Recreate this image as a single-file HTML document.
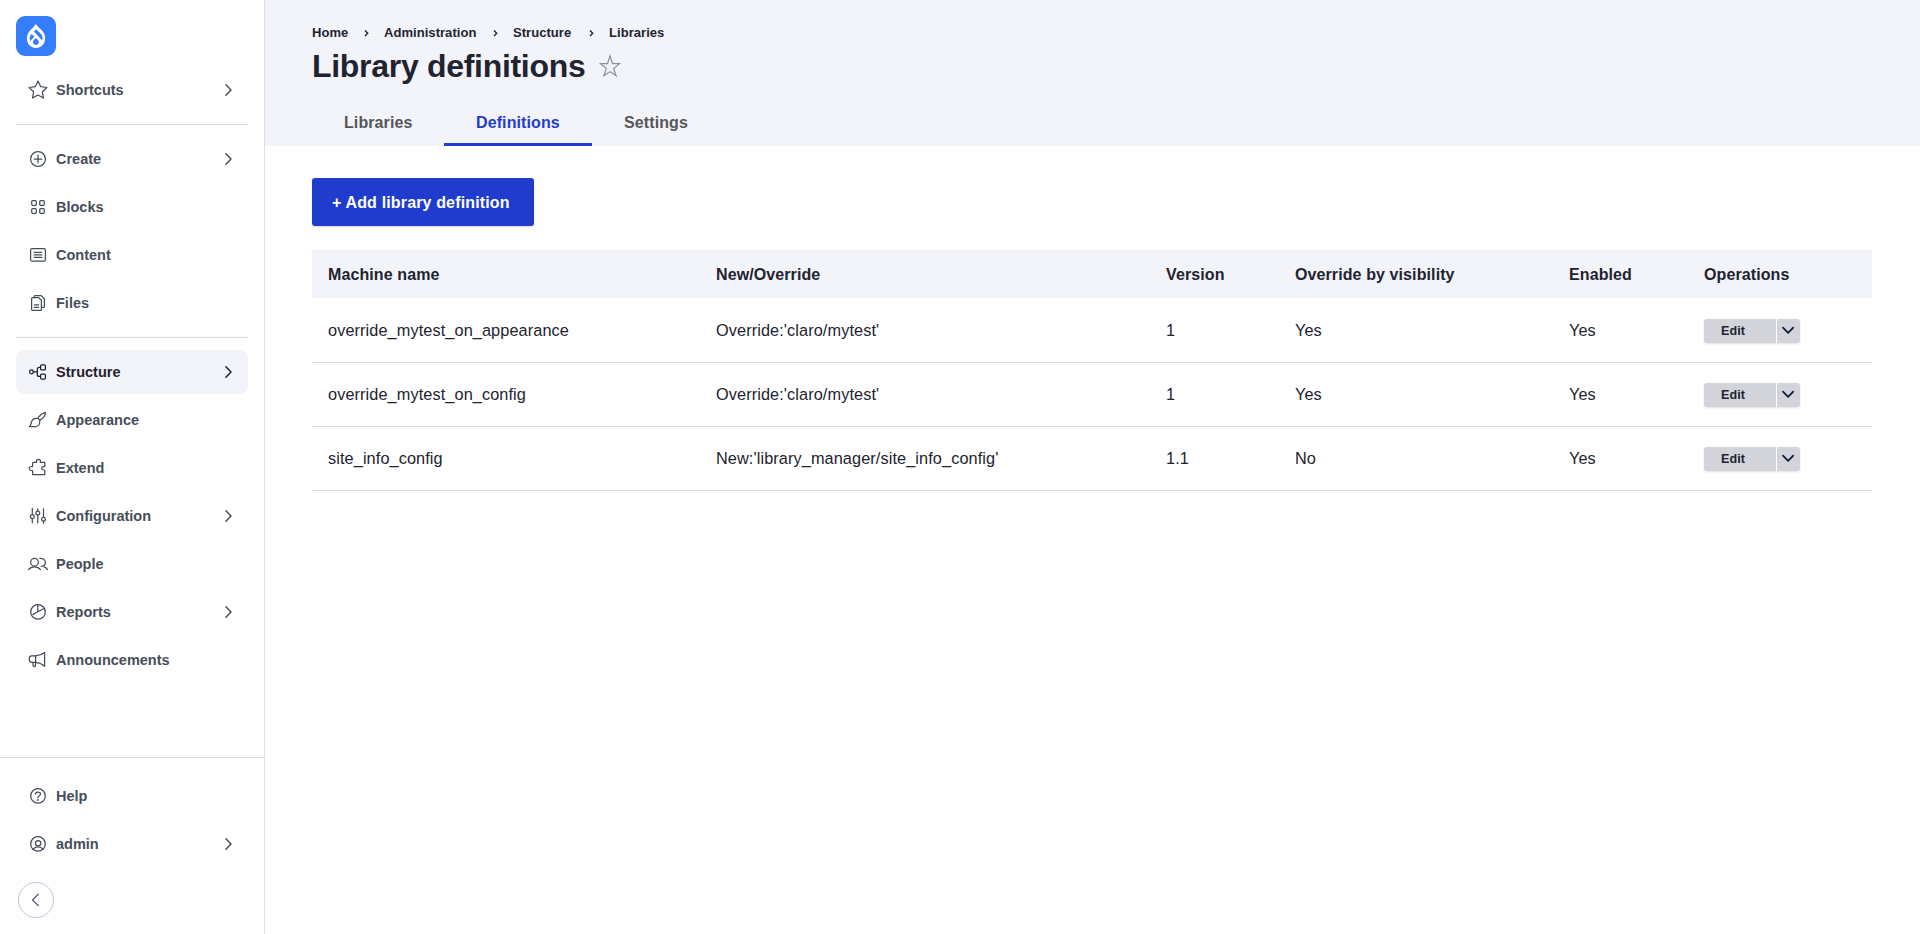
<!DOCTYPE html>
<html><head><meta charset="utf-8">
<style>
*{box-sizing:border-box;margin:0;padding:0}
html,body{width:1920px;height:934px;overflow:hidden;background:#fff;font-family:"Liberation Sans",sans-serif;}
#side{position:absolute;left:0;top:0;width:265px;height:934px;background:#fff;border-right:1px solid #d8deea;}
.logo{position:absolute;left:16px;top:16px;width:40px;height:40px;border-radius:9px;background:#347efe;}
.logo svg{position:absolute;left:0;top:0}
.item{position:absolute;left:16px;width:232px;height:44px;border-radius:8px;}
.item.active{background:#f3f4f9;}
.item .lbl{position:absolute;left:40px;top:0;line-height:44px;font-size:14.5px;font-weight:bold;color:#464e5a;white-space:nowrap;letter-spacing:0}
.item.active .lbl{color:#1f2229}
.item svg.ic{position:absolute;left:12px;top:12px;overflow:visible}
.item svg.chev{position:absolute;left:204px;top:12px;}
.ic *{fill:none;stroke:#464e5a;stroke-width:1.25;stroke-linecap:round;stroke-linejoin:round}
.active .ic *{stroke:#1f2229}
.chev path{fill:none;stroke:#464e5a;stroke-width:1.5;stroke-linecap:round;stroke-linejoin:round}
.hr{position:absolute;left:16px;width:232px;height:1px;background:#d3d9e4}
.collapse{position:absolute;left:18px;top:882px;width:36px;height:36px;border-radius:50%;border:1px solid #bcc5d8;background:#fff}
.collapse svg{position:absolute;left:0;top:0}
#main{position:absolute;left:265px;top:0;width:1655px;height:934px;}
#hdr{position:absolute;left:0;top:0;width:1655px;height:146px;background:#f3f4f9;}
.bc{position:absolute;top:25px;font-size:13px;font-weight:bold;color:#222330;white-space:nowrap;line-height:16px;letter-spacing:.05px}
.bcsep{position:absolute;top:29px;}
h1{position:absolute;left:47px;top:46px;font-size:32px;font-weight:bold;color:#222330;line-height:40px;white-space:nowrap;letter-spacing:-.3px}
.hstar{position:absolute;left:333px;top:54px}
.tab{position:absolute;top:107px;font-size:16px;font-weight:bold;color:#55565b;line-height:32px;white-space:nowrap;letter-spacing:.1px}
.tab.on{color:#1f3ccd}
.uline{position:absolute;left:179px;top:143px;width:148px;height:3px;background:#1f3ccd}
.btn{position:absolute;left:47px;top:178px;width:222px;height:48px;background:#1f3ccd;border-radius:3px;box-shadow:0 1px 2px rgba(0,0,0,.15)}
.btn span{position:absolute;left:20px;top:1px;color:#fff;font-size:16px;font-weight:bold;line-height:48px;white-space:nowrap;letter-spacing:.15px}
.thead{position:absolute;left:47px;top:250px;width:1560px;height:48px;background:#f3f4f9}
.th{position:absolute;top:251px;line-height:48px;font-size:16px;font-weight:bold;color:#222330;white-space:nowrap;letter-spacing:.1px}
.td{position:absolute;font-size:16.3px;color:#222330;white-space:nowrap;line-height:20px;letter-spacing:.1px}
.rsep{position:absolute;left:47px;width:1560px;height:1px;background:#d4d5de}
.drop{position:absolute;left:1439px;width:96px;height:24px;border-radius:3px;background:#d3d4d9;box-shadow:0 1px 2px rgba(0,0,0,.12)}
.drop .e{position:absolute;left:17px;top:0;line-height:24px;font-size:12.5px;font-weight:bold;color:#222330;letter-spacing:.1px}
.drop .d{position:absolute;left:72px;top:0;width:1px;height:24px;background:#fff}
.drop svg{position:absolute;left:73px;top:0}
.drop svg path{fill:none;stroke:#0f1b45;stroke-width:1.8;stroke-linecap:round;stroke-linejoin:round}
</style></head><body>
<div id="side">
  <div class="logo"><svg width="40" height="40" viewBox="0 0 40 40">
    <path fill="#fff" d="M19.8 8 C21.5 10.5 24 12.5 26 14.5 C28 16.5 29.1 19.3 29.1 22.7 C29.1 27.8 25 31.9 20 31.9 C15 31.9 10.9 27.8 10.9 22.7 C10.9 19.3 12.2 16.5 14 14.5 C16 12.5 18.3 10.5 19.8 8 Z"/>
    <path fill="#347efe" d="M18 15.4 L20.1 13.3 C22.5 15.5 25.5 17.8 26.4 20.5 C26.7 21.8 26.5 23.2 26.1 24.4 Z"/>
    <path fill="#347efe" d="M15.4 18 L18.4 20.6 L14.1 25.3 C13.7 24 13.6 22.8 13.8 21.6 C14.1 20.2 14.6 19 15.4 18 Z"/>
    <path fill="#347efe" d="M19.9 22 C20.7 23 22.9 24.3 22.9 25.9 C22.9 27.5 21.6 28.8 19.9 28.8 C18.2 28.8 16.9 27.5 16.9 25.9 C16.9 24.3 19.1 23 19.9 22 Z"/>
  </svg></div>

  <div class="item" style="top:68px">
    <svg class="ic" width="20" height="20" viewBox="0 0 20 20"><path d="M10.00 1.00 L12.70 6.68 L18.94 7.50 L14.37 11.82 L15.53 18.00 L10.00 15.00 L4.47 18.00 L5.63 11.82 L1.06 7.50 L7.30 6.68 Z"/></svg>
    <span class="lbl">Shortcuts</span>
    <svg class="chev" width="20" height="20" viewBox="0 0 20 20"><path d="M5.9 4.8 L11 10 L5.9 15.2"/></svg>
  </div>
  <div class="hr" style="top:124px"></div>
  <div class="item" style="top:137px">
    <svg class="ic" width="20" height="20" viewBox="0 0 20 20"><circle cx="10" cy="10" r="7.4"/><path d="M6.2 10 H13.8 M10 6.2 V13.8"/></svg>
    <span class="lbl">Create</span>
    <svg class="chev" width="20" height="20" viewBox="0 0 20 20"><path d="M5.9 4.8 L11 10 L5.9 15.2"/></svg>
  </div>
  <div class="item" style="top:185px">
    <svg class="ic" width="20" height="20" viewBox="0 0 20 20"><rect x="3.7" y="3.7" width="4.6" height="4.6" rx="1"/><rect x="11.7" y="3.7" width="4.6" height="4.6" rx="1"/><rect x="3.7" y="11.7" width="4.6" height="4.6" rx="1"/><rect x="11.7" y="11.7" width="4.6" height="4.6" rx="1"/></svg>
    <span class="lbl">Blocks</span>
  </div>
  <div class="item" style="top:233px">
    <svg class="ic" width="20" height="20" viewBox="0 0 20 20"><rect x="2.6" y="3.6" width="14.8" height="12.6" rx="1.5"/><path d="M6.2 7.4 H13.8 M6.2 9.9 H13.8 M6.2 12.4 H13.8"/></svg>
    <span class="lbl">Content</span>
  </div>
  <div class="item" style="top:281px">
    <svg class="ic" width="20" height="20" viewBox="0 0 20 20"><path d="M6.2 4.6 V3.5 C6.2 2.9 6.6 2.6 7.2 2.6 H13.2 L16.4 5.8 V13.4 C16.4 14 16 14.4 15.4 14.4 H13.9"/><path d="M4.6 4.6 H10.8 L13.4 7.3 V16.4 C13.4 17 13 17.3 12.4 17.3 H4.6 C4 17.3 3.6 17 3.6 16.4 V5.6 C3.6 5 4 4.6 4.6 4.6 Z"/><path d="M6.4 11.8 H10.6 M6.4 14.4 H10.6"/></svg>
    <span class="lbl">Files</span>
  </div>
  <div class="hr" style="top:337px"></div>
  <div class="item active" style="top:350px">
    <svg class="ic" width="20" height="20" viewBox="0 0 20 20"><rect x="1.7" y="7.8" width="3.5" height="4" rx="1.5"/><path d="M5.2 9.8 H9.3 M12.1 5.4 H11.3 C10.2 5.4 9.3 6.3 9.3 7.4 V12.4 C9.3 13.5 10.2 14.4 11.3 14.4 H12.1"/><rect x="12.6" y="2.9" width="4.8" height="5" rx="1"/><rect x="12.6" y="12" width="4.8" height="5" rx="1"/></svg>
    <span class="lbl">Structure</span>
    <svg class="chev" width="20" height="20" viewBox="0 0 20 20"><path d="M5.9 4.8 L11 10 L5.9 15.2" style="stroke:#1f2229"/></svg>
  </div>
  <div class="item" style="top:398px">
    <svg class="ic" width="20" height="20" viewBox="0 0 20 20"><path d="M9.6 8.3 C11.2 6 14 3.3 17.6 2.3 C17.3 5.5 14.6 8.6 12.3 10.2 Z"/><path d="M9.4 8.5 C7 7.9 4.6 8.9 3.7 11.4 C3.1 13.3 2.9 15.5 1.4 16.5 H8.3 C10.4 16.1 11.9 13.9 11.7 10.6"/></svg>
    <span class="lbl">Appearance</span>
  </div>
  <div class="item" style="top:446px">
    <svg class="ic" width="20" height="20" viewBox="0 0 20 20"><path d="M4.6 16.5 H16.8 V12.5 L14.2 11.5 C13.2 11 13.6 9.5 14.6 8.8 L16.8 8.3 V5.2 C16.8 4.7 16.4 4.4 15.9 4.4 H12.4 V3 C12.4 2 11.6 1.3 10.5 1.3 C9.4 1.3 8.5 2 8.5 3 V4.4 H5.6 C5 4.4 4.6 4.8 4.6 5.4 V8.5 H3 C1.8 8.9 1.1 9.6 1.1 10.6 C1.1 11.6 2 12.4 3.2 12.5 L4.6 12.7 Z"/></svg>
    <span class="lbl">Extend</span>
  </div>
  <div class="item" style="top:494px">
    <svg class="ic" width="20" height="20" viewBox="0 0 20 20"><path d="M4.3 2.4 V8.7 M4.3 12.5 V16.8 M9.8 2.9 V5 M9.8 8.8 V16.8 M15.5 2.9 V11.3 M15.5 15.1 V17.3"/><circle cx="4.3" cy="10.6" r="1.9"/><circle cx="9.8" cy="6.9" r="1.9"/><circle cx="15.5" cy="13.2" r="1.9"/></svg>
    <span class="lbl">Configuration</span>
    <svg class="chev" width="20" height="20" viewBox="0 0 20 20"><path d="M5.9 4.8 L11 10 L5.9 15.2"/></svg>
  </div>
  <div class="item" style="top:542px">
    <svg class="ic" width="20" height="20" viewBox="0 0 20 20"><circle cx="6.5" cy="8.2" r="3.8"/><path d="M0.6 15.6 C1.8 13.8 3.4 12.8 6.5 12.8 C9.6 12.8 11.2 13.8 12.5 15.6"/><path d="M12 4.4 C14.5 4.2 17.4 5.6 17.4 8.3 C17.4 10.8 15.4 12.3 13.3 12.4"/><path d="M16 12.9 C17.4 13.3 18.7 14.3 19.6 15.6"/></svg>
    <span class="lbl">People</span>
  </div>
  <div class="item" style="top:590px">
    <svg class="ic" width="20" height="20" viewBox="0 0 20 20"><circle cx="10" cy="9.9" r="7.3"/><path d="M9.8 2.7 V9.8 L4.8 12.6 M9.8 9.8 L16.2 6.5"/></svg>
    <span class="lbl">Reports</span>
    <svg class="chev" width="20" height="20" viewBox="0 0 20 20"><path d="M5.9 4.8 L11 10 L5.9 15.2"/></svg>
  </div>
  <div class="item" style="top:638px">
    <svg class="ic" width="20" height="20" viewBox="0 0 20 20"><path d="M7.6 5.8 H3.6 C2.2 5.8 1.2 7 1.2 9.1 C1.2 11.2 2.2 12.4 3.6 12.4 H7.6 Z"/><path d="M7.6 5.8 C10.5 5.6 13.5 5 16.6 2.4 V16.3 C13.5 13.6 10.5 12.6 7.6 12.4"/><path d="M4.8 12.4 L5.2 15.8 C5.3 16.4 5.7 16.6 6.2 16.6 C6.9 16.6 7.3 16.2 7.4 15.6 L7.6 12.4"/></svg>
    <span class="lbl">Announcements</span>
  </div>

  <div class="hr" style="top:757px;left:0;width:264px"></div>
  <div class="item" style="top:774px">
    <svg class="ic" width="20" height="20" viewBox="0 0 20 20"><circle cx="10" cy="9.9" r="7.3"/><path d="M7.4 8.2 C7.4 6.8 8.6 6 9.9 6 C11.3 6 12.5 6.9 12.5 8.1 C12.5 9.4 11.4 9.8 10.6 10.4 C10.1 10.8 9.9 11.2 9.9 11.7"/><circle cx="9.9" cy="14" r=".35"/></svg>
    <span class="lbl">Help</span>
  </div>
  <div class="item" style="top:822px">
    <svg class="ic" width="20" height="20" viewBox="0 0 20 20"><circle cx="10" cy="9.9" r="7.3"/><circle cx="10.1" cy="9.2" r="2.7"/><path d="M5 15.3 C6.2 13.6 7.9 12.8 10 12.8 C12.1 12.8 13.8 13.6 15 15.3"/></svg>
    <span class="lbl">admin</span>
    <svg class="chev" width="20" height="20" viewBox="0 0 20 20"><path d="M5.9 4.8 L11 10 L5.9 15.2"/></svg>
  </div>
  <div class="collapse"><svg width="34" height="34" viewBox="0 0 34 34"><path d="M19.2 11.2 L13.6 16.9 L19.2 22.5" fill="none" stroke="#5a6272" stroke-width="1.4" stroke-linecap="round" stroke-linejoin="round"/></svg></div>
</div>

<div id="main">
  <div id="hdr">
    <span class="bc" style="left:47px">Home</span>
    <svg class="bcsep" style="left:99px" width="6" height="8" viewBox="0 0 6 8"><path d="M1 1.5 L3.7 4.2 L1 6.9" fill="none" stroke="#222330" stroke-width="1.4"/></svg>
    <span class="bc" style="left:119px">Administration</span>
    <svg class="bcsep" style="left:228px" width="6" height="8" viewBox="0 0 6 8"><path d="M1 1.5 L3.7 4.2 L1 6.9" fill="none" stroke="#222330" stroke-width="1.4"/></svg>
    <span class="bc" style="left:248px">Structure</span>
    <svg class="bcsep" style="left:324px" width="6" height="8" viewBox="0 0 6 8"><path d="M1 1.5 L3.7 4.2 L1 6.9" fill="none" stroke="#222330" stroke-width="1.4"/></svg>
    <span class="bc" style="left:344px">Libraries</span>
    <h1>Library definitions</h1>
    <svg class="hstar" width="24" height="24" viewBox="0 0 24 24"><path d="M12 1.9 L14.5 9.7 L21.5 9.7 L15.7 14.6 L18.1 21.7 L12 17.6 L5.9 21.7 L8.3 14.6 L2.5 9.7 L9.5 9.7 Z" fill="none" stroke="#8a8e99" stroke-width="1.2" stroke-linejoin="miter"/></svg>
    <span class="tab" style="left:79px">Libraries</span>
    <span class="tab on" style="left:211px">Definitions</span>
    <span class="tab" style="left:359px">Settings</span>
    <div class="uline"></div>
  </div>
  <div class="btn"><span>+ Add library definition</span></div>
  <div class="thead"></div>
  <span class="th" style="left:63px">Machine name</span>
  <span class="th" style="left:451px">New/Override</span>
  <span class="th" style="left:901px">Version</span>
  <span class="th" style="left:1030px">Override by visibility</span>
  <span class="th" style="left:1304px">Enabled</span>
  <span class="th" style="left:1439px">Operations</span>

  <span class="td" style="left:63px;top:320px">override_mytest_on_appearance</span>
  <span class="td" style="left:451px;top:320px">Override:'claro/mytest'</span>
  <span class="td" style="left:901px;top:320px">1</span>
  <span class="td" style="left:1030px;top:320px">Yes</span>
  <span class="td" style="left:1304px;top:320px">Yes</span>
  <div class="drop" style="top:319px"><span class="e">Edit</span><span class="d"></span><svg width="23" height="24" viewBox="0 0 23 24"><path d="M6 8.7 L11.1 13.8 L16.2 8.7"/></svg></div>
  <div class="rsep" style="top:362px"></div>

  <span class="td" style="left:63px;top:384px">override_mytest_on_config</span>
  <span class="td" style="left:451px;top:384px">Override:'claro/mytest'</span>
  <span class="td" style="left:901px;top:384px">1</span>
  <span class="td" style="left:1030px;top:384px">Yes</span>
  <span class="td" style="left:1304px;top:384px">Yes</span>
  <div class="drop" style="top:383px"><span class="e">Edit</span><span class="d"></span><svg width="23" height="24" viewBox="0 0 23 24"><path d="M6 8.7 L11.1 13.8 L16.2 8.7"/></svg></div>
  <div class="rsep" style="top:426px"></div>

  <span class="td" style="left:63px;top:448px">site_info_config</span>
  <span class="td" style="left:451px;top:448px">New:'library_manager/site_info_config'</span>
  <span class="td" style="left:901px;top:448px">1.1</span>
  <span class="td" style="left:1030px;top:448px">No</span>
  <span class="td" style="left:1304px;top:448px">Yes</span>
  <div class="drop" style="top:447px"><span class="e">Edit</span><span class="d"></span><svg width="23" height="24" viewBox="0 0 23 24"><path d="M6 8.7 L11.1 13.8 L16.2 8.7"/></svg></div>
  <div class="rsep" style="top:490px"></div>
</div>
</body></html>
